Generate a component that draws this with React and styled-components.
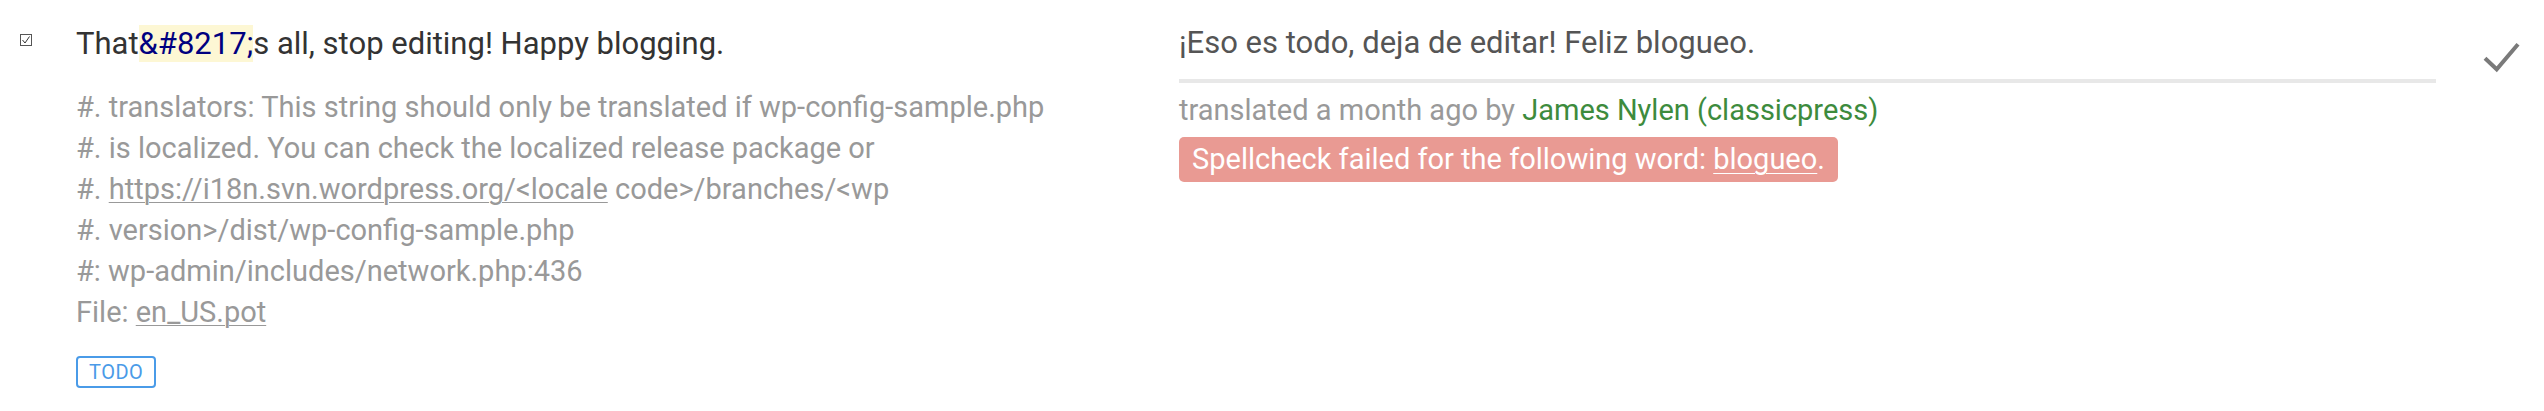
import React from "react";
import styled, { createGlobalStyle } from "styled-components";

const Global = createGlobalStyle`
  html, body { margin: 0; padding: 0; background: #fff; }
  body { font-family: Roboto, "Noto Sans", "Liberation Sans", sans-serif; }
`;

const Row = styled.div`
  display: grid;
  grid-template-columns: 76px 1103px 1257px 1fr;
  align-items: start;
  width: 2544px;
  height: 411px;
  box-sizing: border-box;
`;

const CheckCell = styled.div`
  padding: 31px 0 0 20px;
`;

const OriginalCell = styled.div`
  padding-top: 26px;
`;

const Original = styled.div`
  font-size: 31px;
  line-height: 36px;
  color: #333;
`;

const Entity = styled.span`
  background: #fdf7d4;
  color: #000080;
`;

const Meta = styled.div`
  margin-top: 25px;
  font-size: 29px;
  line-height: 41px;
  color: #999;
`;

const MetaLink = styled.a`
  color: #999;
  text-decoration: underline;
  text-underline-offset: 3px;
  text-decoration-thickness: 1px;
`;

const Tag = styled.span`
  display: inline-flex;
  align-items: center;
  margin-top: 23px;
  height: 32px;
  box-sizing: border-box;
  padding: 0 11px;
  border: 2px solid #4a9be8;
  border-radius: 4px;
  color: #4a9be8;
  font-size: 20px;
  letter-spacing: 0.5px;
`;

const TranslationCell = styled.div`
  padding-top: 25px;
`;

const Translation = styled.div`
  font-size: 31px;
  line-height: 36px;
  color: #555;
  padding-bottom: 18px;
  border-bottom: 4px solid #e8e8e8;
`;

const Byline = styled.div`
  margin-top: 10px;
  font-size: 29px;
  line-height: 34px;
  color: #999;
`;

const Author = styled.span`
  color: #3d8b3d;
`;

const Warning = styled.div`
  display: inline-block;
  margin-top: 10px;
  padding: 0 13px;
  height: 45px;
  line-height: 45px;
  box-sizing: border-box;
  background: #e99a93;
  border-radius: 5px;
  color: #fff;
  font-size: 29px;
`;

const WarnWord = styled.span`
  text-decoration: underline;
  text-underline-offset: 4px;
  text-decoration-thickness: 1px;
`;

const ActionCell = styled.div`
  padding: 42px 0 0 46px;
`;

const CheckBox = () => (
  <svg width="12" height="12" viewBox="0 0 12 12">
    <rect x="0.5" y="0.5" width="11" height="11" fill="#fff" stroke="#555" strokeWidth="1" />
    <polyline points="2.5,6 5,9 9.5,2.5" fill="none" stroke="#333" strokeWidth="1" />
  </svg>
);

const Approve = () => (
  <svg width="40" height="32" viewBox="0 0 40 32">
    <polyline points="3,16.3 14.7,27.3 36,2.3" fill="none" stroke="#7a7a7a" strokeWidth="4" />
  </svg>
);

export default function App() {
  return (
    <>
      <Global />
      <Row>
        <CheckCell>
          <CheckBox />
        </CheckCell>
        <OriginalCell>
          <Original>
            That<Entity>&amp;#8217;</Entity>s all, stop editing! Happy blogging.
          </Original>
          <Meta>
            <div>#. translators: This string should only be translated if wp-config-sample.php</div>
            <div>#. is localized. You can check the localized release package or</div>
            <div>
              #. <MetaLink>https://i18n.svn.wordpress.org/&lt;locale</MetaLink> code&gt;/branches/&lt;wp
            </div>
            <div>#. version&gt;/dist/wp-config-sample.php</div>
            <div>#: wp-admin/includes/network.php:436</div>
            <div>
              File: <MetaLink>en_US.pot</MetaLink>
            </div>
          </Meta>
          <Tag>TODO</Tag>
        </OriginalCell>
        <TranslationCell>
          <Translation>¡Eso es todo, deja de editar! Feliz blogueo.</Translation>
          <Byline>
            translated a month ago by <Author>James Nylen (classicpress)</Author>
          </Byline>
          <Warning>
            Spellcheck failed for the following word: <WarnWord>blogueo</WarnWord>.
          </Warning>
        </TranslationCell>
        <ActionCell>
          <Approve />
        </ActionCell>
      </Row>
    </>
  );
}
